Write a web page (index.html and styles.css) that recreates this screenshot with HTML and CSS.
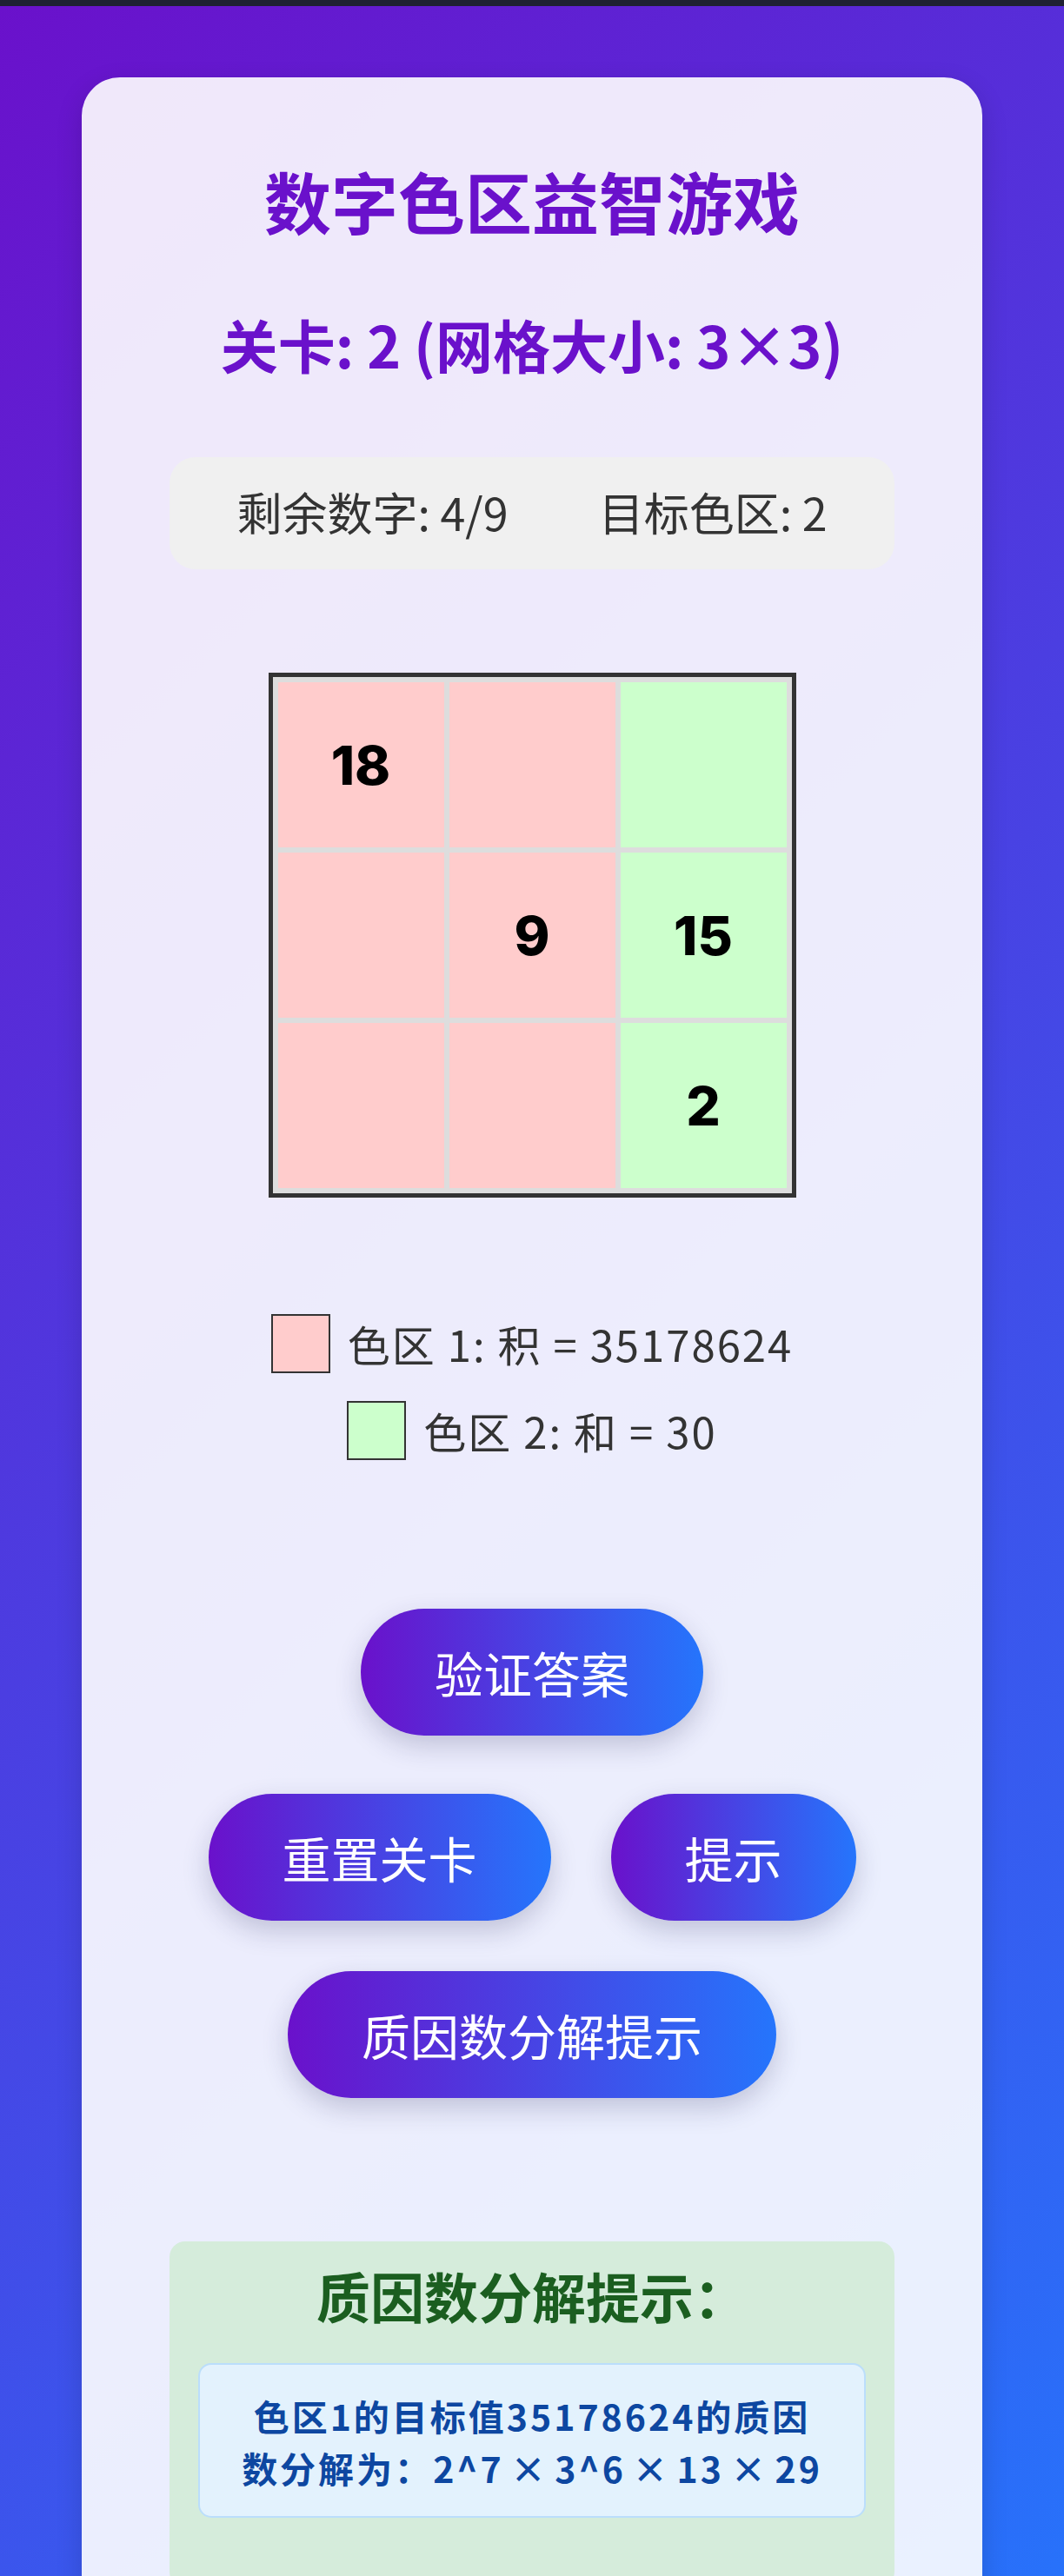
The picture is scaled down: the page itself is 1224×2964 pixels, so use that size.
FILE: index.html
```html
<!DOCTYPE html>
<html lang="zh-CN">
<head>
<meta charset="utf-8">
<title>数字色区益智游戏</title>
<link rel="stylesheet" href="styles.css">
</head>
<body>
<div class="statusbar"></div>
<div class="page">
  <main class="card">
    <h1 class="title">数字色区益智游戏</h1>
    <h2 class="level">关卡: 2 (网格大小: 3×3)</h2>
    <div class="stats">
      <span>剩余数字: 4/9</span>
      <span>目标色区: 2</span>
    </div>
    <div class="grid">
      <div class="cell pink">18</div>
      <div class="cell pink"></div>
      <div class="cell green"></div>
      <div class="cell pink"></div>
      <div class="cell pink">9</div>
      <div class="cell green">15</div>
      <div class="cell pink"></div>
      <div class="cell pink"></div>
      <div class="cell green">2</div>
    </div>
    <div class="legend">
      <div class="legend-item"><div class="swatch pink"></div><div class="legend-text">色区 1: 积 = 35178624</div></div>
      <div class="legend-item"><div class="swatch green"></div><div class="legend-text">色区 2: 和 = 30</div></div>
    </div>
    <div class="actions">
      <div class="btn-row"><button class="btn">验证答案</button></div>
      <div class="btn-row row-two"><button class="btn">重置关卡</button><button class="btn">提示</button></div>
      <div class="btn-row row-three"><button class="btn">质因数分解提示</button></div>
    </div>
    <section class="hint">
      <h3 class="hint-title">质因数分解提示：</h3>
      <div class="hint-body">色区1的目标值35178624的质因<br>数分解为：<span class="formula">2^7 × 3^6 × 13 × 29</span></div>
    </section>
  </main>
</div>
</body>
</html>
```

FILE: styles.css
```css
html, body {
  margin: 0;
  padding: 0;
}
body {
  background: #1f2133;
  font-family: "Noto Sans CJK SC", "Noto Sans", sans-serif;
}
.statusbar {
  height: 7px;
  background: #1f2133;
}
.page {
  background: linear-gradient(135deg, #6a11cb 0%, #2575fc 100%);
  padding: 82px 94px 60px;
}
.card {
  background: rgba(255, 255, 255, 0.9);
  border-radius: 44px;
  padding: 96px 101px 80px;
  box-shadow: 0 10px 30px rgba(0, 0, 0, 0.15);
  text-align: center;
}
.title {
  margin: 0;
  font-size: 77px;
  line-height: 92px;
  font-weight: 700;
  color: #6a11cb;
}
.level {
  margin: 78px 0 0;
  font-size: 66px;
  line-height: 80px;
  font-weight: 700;
  color: #6a11cb;
}
.stats {
  margin-top: 91px;
  background: #f0f0f0;
  border-radius: 30px;
  padding: 28px 20px 32px;
  display: flex;
  justify-content: center;
  gap: 104px;
  font-size: 52px;
  line-height: 69px;
  color: #333;
}
.grid {
  margin: 119px auto 0;
  width: fit-content;
  display: grid;
  grid-template-columns: repeat(3, 191px);
  grid-auto-rows: 190px;
  gap: 6px;
  padding: 6px;
  background: #ddd;
  border: 5px solid #333;
}
.cell {
  display: flex;
  align-items: center;
  justify-content: center;
  font-family: Inter, "Open Sans", sans-serif;
  font-weight: 800;
  font-size: 62px;
  color: #000;
}
.pink { background: #ffcccc; }
.green { background: #ccffcc; }
.legend {
  margin-top: 132px;
  display: flex;
  flex-direction: column;
  align-items: center;
  gap: 28px;
}
.legend-item {
  display: flex;
  align-items: center;
  gap: 20px;
}
.swatch {
  width: 64px;
  height: 64px;
  border: 2px solid #333;
}
.legend-text {
  font-size: 49px;
  line-height: 72px;
  color: #333;
  letter-spacing: 2px;
}
.actions {
  margin-top: 169px;
}
.btn-row {
  display: flex;
  justify-content: center;
  gap: 69px;
}
.row-two { margin-top: 67px; }
.row-three { margin-top: 58px; }
.btn {
  border: none;
  border-radius: 73px;
  padding: 36px 85px;
  font-family: "Noto Sans CJK SC", "Noto Sans", sans-serif;
  font-size: 56px;
  line-height: 74px;
  color: #fff;
  background: linear-gradient(to right, #6a11cb 0%, #2575fc 100%);
  box-shadow: 0 12px 30px rgba(40, 40, 90, 0.22);
}
.hint {
  margin-top: 165px;
  background: #d5ecdb;
  border-radius: 18px;
  padding: 25px 33px 80px;
}
.hint-title {
  margin: 0;
  font-size: 62px;
  line-height: 74px;
  font-weight: 700;
  color: #1b5e20;
}
.hint-body {
  margin-top: 41px;
  background: #e3f2fd;
  border: 2px solid #bbdefb;
  border-radius: 15px;
  padding: 28px 14px 26px;
  font-size: 41px;
  line-height: 60px;
  letter-spacing: 3px;
  font-weight: 700;
  color: #0d47a1;
}
.formula {
  word-spacing: -5px;
}
```
